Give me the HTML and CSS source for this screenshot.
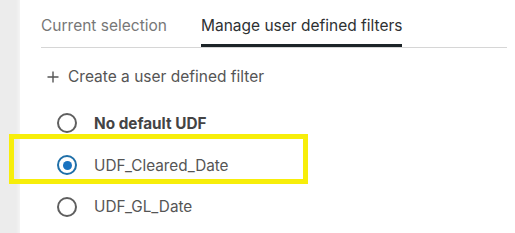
FILE: index.html
```html
<!DOCTYPE html>
<html lang="en">
<head>
    <meta charset="UTF-8">
    <title>User defined filters</title>
    <link rel="stylesheet" href="styles.css">
</head>
<body>
    <div class="layout">
        <aside class="sidebar"></aside>
        <main class="panel">
            <div class="tabs">
                <div class="tab">Current selection</div>
                <div class="tab active">Manage user defined filters</div>
            </div>

            <div class="create-row">
                <svg class="plus" width="12" height="12" viewBox="0 0 12 12">
                    <path d="M6 0.5V11.5M0.5 6H11.5" stroke="#555" stroke-width="1.4" fill="none"/>
                </svg>
                <span>Create a user defined filter</span>
            </div>

            <ul class="udf-list">
                <li class="udf-item">
                    <span class="radio"></span>
                    <span class="label bold">No default UDF</span>
                </li>
                <li class="udf-item highlight">
                    <span class="radio checked"></span>
                    <span class="label">UDF_Cleared_Date</span>
                </li>
                <li class="udf-item">
                    <span class="radio"></span>
                    <span class="label">UDF_GL_Date</span>
                </li>
            </ul>
        </main>
    </div>
</body>
</html>
```

FILE: styles.css
```css
*,
*::before,
*::after {
    box-sizing: border-box;
}

body {
    margin: 0;
    padding: 0;
    background: #fff;
    font-family: Inter, "Noto Sans", sans-serif;
}

.layout {
    display: flex;
    height: 233px;
    overflow: hidden;
}

.sidebar {
    width: 20px;
    flex-shrink: 0;
    background: linear-gradient(to right, #ececec 0, #ececec 16px, #f4f4f4 20px);
}

.panel {
    flex: 1;
    padding: 0 8px 0 21px;
}

.tabs {
    display: flex;
    gap: 34px;
    padding-top: 16px;
    border-bottom: 1px solid #d6d6d6;
}

.tab {
    font-size: 15.5px;
    line-height: 20px;
    color: #777;
    padding-bottom: 8px;
    border-bottom: 3px solid transparent;
}

.tab.active {
    color: #2e3133;
    border-bottom-color: #1c2428;
}

.create-row {
    display: flex;
    align-items: center;
    gap: 9px;
    margin-top: 19px;
    padding-left: 6px;
    font-size: 15.5px;
    line-height: 20px;
    color: #555;
}

.udf-list {
    list-style: none;
    margin: 0;
    padding: 0;
    margin-top: 15px;
}

.udf-item {
    position: relative;
    display: flex;
    align-items: center;
    height: 42px;
    padding-left: 16px;
    font-size: 15.3px;
    color: #555;
}

.udf-item:last-child {
    height: 41px;
}

/* yellow marker drawn over the selected row */
.udf-item.highlight::before {
    content: "";
    position: absolute;
    left: -32px;
    top: -10px;
    width: 299px;
    bottom: 2px;
    border: 5px solid #f7ee0a;
}

.radio {
    width: 20px;
    height: 20px;
    border: 2px solid #5f5f5f;
    border-radius: 50%;
    margin-right: 17px;
    display: flex;
    align-items: center;
    justify-content: center;
}

.radio.checked {
    border-color: #1f6fa8;
}

.radio.checked::after {
    content: "";
    width: 9px;
    height: 9px;
    border-radius: 50%;
    background: #1a73c0;
}

.label.bold {
    font-weight: 700;
    color: #444;
}
```
